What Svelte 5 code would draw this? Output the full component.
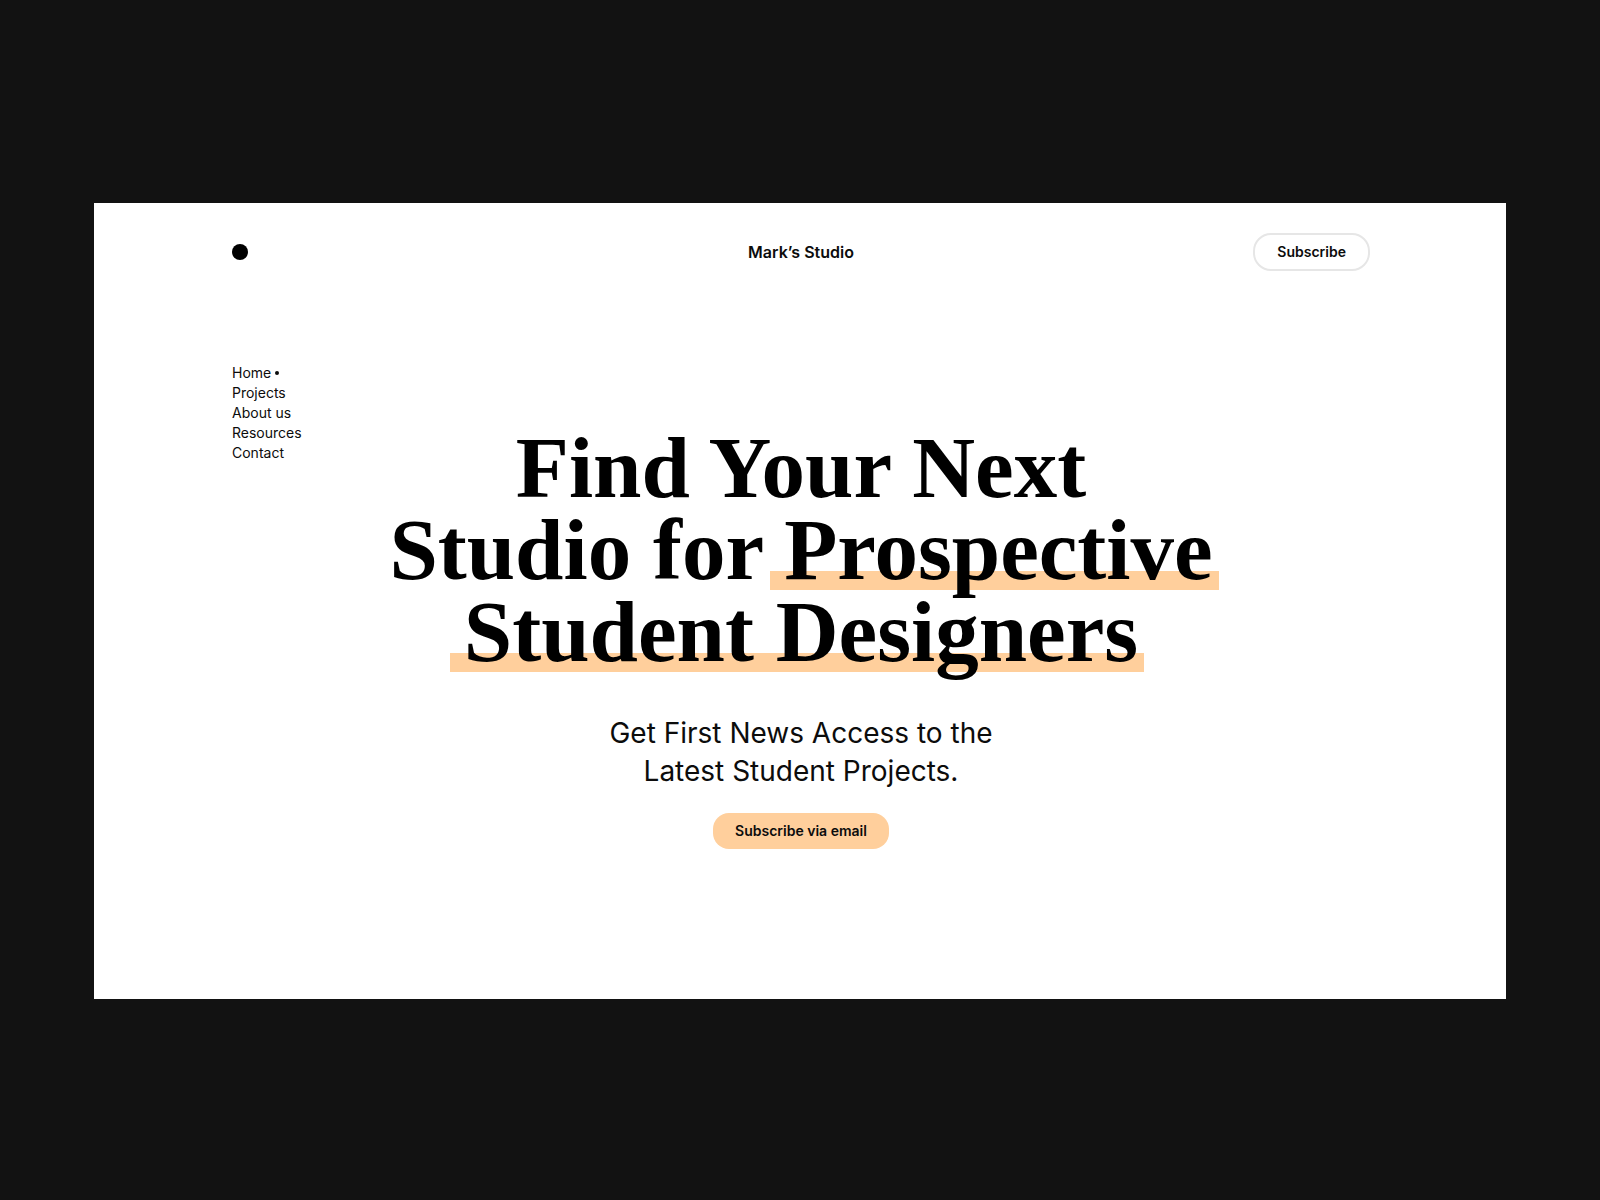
<script lang="ts">
	const links = ['Home', 'Projects', 'About us', 'Resources', 'Contact'];
	let current = $state('Home');
</script>

<div class="stage">
	<div class="page">
		<header>
			<a class="logo" href="#home" aria-label="Home">
				<svg viewBox="0 0 16 16" width="16" height="16"><circle cx="8" cy="8" r="8" /></svg>
			</a>
			<span class="brand">Mark’s Studio</span>
			<button class="outline" type="button">Subscribe</button>
		</header>

		<div class="content">
			<nav>
				<ul>
					{#each links as link}
						<li>
							<a href="#{link}" class:current={link === current} onclick={() => (current = link)}>{link}</a>
						</li>
					{/each}
				</ul>
			</nav>

			<main>
				<h1>
					Find Your Next<br />
					Studio for <mark>Prospective</mark><br />
					<mark>Student Designers</mark>
				</h1>
				<p>Get First News Access to the<br />Latest Student Projects.</p>
				<button class="filled" type="button">Subscribe via email</button>
			</main>
		</div>
	</div>
</div>

<style>
	:global(body) {
		background: #121212;
	}

	.stage {
		box-sizing: border-box;
		display: flex;
		min-height: 100vh;
		padding: 203px 94px 201px;
		font-family: Inter, 'Liberation Sans', sans-serif;
		color: #0c0c0c;
	}

	.page {
		flex: 1;
		padding: 30px 136px 30px 138px;
		background: #fff;
	}

	header {
		display: grid;
		grid-template-columns: 1fr auto 1fr;
		align-items: center;
	}

	.logo {
		display: flex;
		justify-self: start;
	}

	.brand {
		font-size: 16px;
		font-weight: 600;
	}

	button {
		font: inherit;
		font-size: 14px;
		font-weight: 600;
		line-height: 20px;
		color: inherit;
		cursor: pointer;
	}

	.outline {
		justify-self: end;
		padding: 7px 22px;
		border: 2px solid #e6e6e6;
		border-radius: 18px;
		background: #fff;
	}

	.content {
		display: grid;
		grid-template-columns: 1fr auto 1fr;
		padding-top: 92px;
	}

	ul {
		margin: 0;
		padding: 0;
		list-style: none;
		font-size: 14px;
		line-height: 20px;
	}

	nav a {
		color: inherit;
		text-decoration: none;
	}

	.current::after {
		content: '';
		display: inline-block;
		width: 4px;
		height: 4px;
		margin-left: 4px;
		border-radius: 50%;
		background: currentColor;
		vertical-align: 3px;
	}

	main {
		padding-top: 64px;
		text-align: center;
	}

	h1 {
		margin: 0;
		font-family: 'Liberation Serif', serif;
		font-size: 87px;
		font-weight: 700;
		line-height: 82px;
		color: #000;
		white-space: nowrap;
	}

	mark {
		display: inline-block;
		margin: 0 -6px 0 -14px;
		padding: 0 6px 0 14px;
		background: linear-gradient(#ffcf9c, #ffcf9c) 0 62px / 100% 19px no-repeat;
		color: inherit;
	}

	p {
		margin: 41px 0 23px;
		font-size: 28px;
		line-height: 38px;
	}

	.filled {
		padding: 8px 22px;
		border: 0;
		border-radius: 16px;
		background: #ffcf9c;
	}
</style>
